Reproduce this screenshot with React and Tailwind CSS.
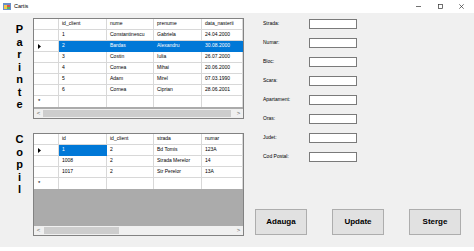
import React from 'react';

const parinteCols = ['id_client', 'nume', 'prenume', 'data_nasterii'];
const parinteRows = [
  ['1', 'Constantinescu', 'Gabriela', '24.04.2000'],
  ['2', 'Bardas', 'Alexandru', '30.08.2000'],
  ['3', 'Costin', 'Iulia', '26.07.2000'],
  ['4', 'Cornea', 'Mihai', '20.06.2000'],
  ['5', 'Adam', 'Mirel', '07.03.1990'],
  ['6', 'Cornea', 'Ciprian', '28.06.2001'],
];

const copilCols = ['id', 'id_client', 'strada', 'numar'];
const copilRows = [
  ['1', '2', 'Bd Tomis', '123A'],
  ['1008', '2', 'Strada Merelor', '14'],
  ['1017', '2', 'Str Perelor', '13A'],
];

const colW = ['w-[48px]', 'w-[47px]', 'w-[48px]', 'flex-1'];

const fields = ['Strada:', 'Numar:', 'Bloc:', 'Scara:', 'Apartament:', 'Oras:', 'Judet:', 'Cod Postal:'];

const Arrow = () => (
  <svg width="3" height="5" viewBox="0 0 3 5">
    <path d="M0 0 L3 2.5 L0 5 Z" fill="#000" />
  </svg>
);

const DataGrid = ({ cols, rows, current, isSelected, grayH, thumbLeft, thumbW }) => (
  <div className="w-[211px] border border-[#828282] bg-white flex flex-col text-[5px] text-black">
    <div className="flex h-[11px]">
      <div className="w-[25px] border-r border-b border-[#d8d8d8]" />
      {cols.map((c, i) => (
        <div key={c} className={`${colW[i]} border-r border-b border-[#d8d8d8] flex items-center pl-[3px] overflow-hidden whitespace-nowrap`}>
          {c}
        </div>
      ))}
    </div>
    {rows.map((r, ri) => (
      <div key={ri} className="flex h-[11px]">
        <div className="w-[25px] border-r border-b border-[#d8d8d8] flex items-center pl-[4px]">
          {ri === current && <Arrow />}
        </div>
        {r.map((v, ci) => {
          const sel = isSelected(ri, ci);
          return (
            <div
              key={ci}
              className={`${colW[ci]} border-r border-b flex items-center pl-[3px] overflow-hidden whitespace-nowrap ${
                sel ? 'bg-[#0078d7] text-white border-[#0078d7]' : 'border-[#d8d8d8]'
              }`}
            >
              {v}
            </div>
          );
        })}
      </div>
    ))}
    <div className="flex h-[11px]">
      <div className="w-[25px] border-r border-[#d8d8d8] flex items-center pl-[4px] text-[6px]">*</div>
      {cols.map((c, i) => (
        <div key={c} className={`${colW[i]} border-r border-[#d8d8d8]`} />
      ))}
    </div>
    <div className="bg-[#ababab]" style={{ height: grayH }} />
    <div className="h-[9px] bg-[#f0f0f0] flex items-center relative">
      <div className="w-[9px] flex justify-center text-[#606060] text-[6px]">&lt;</div>
      <div className="flex-1 h-[7px] relative">
        <div className="absolute top-0 h-[7px] bg-[#cdcdcd]" style={{ left: thumbLeft, width: thumbW }} />
      </div>
      <div className="w-[9px] flex justify-center text-[#606060] text-[6px]">&gt;</div>
    </div>
  </div>
);

const Letters = ({ text, top }) => (
  <div className={`w-[33px] flex flex-col items-center pl-[6px] font-bold text-[11px] leading-[12.5px] ${top}`}>
    {text.split('').map((ch, i) => (
      <span key={i}>{ch}</span>
    ))}
  </div>
);

export default function App() {
  return (
    <div className="w-[474px] h-[251px] bg-white overflow-hidden" style={{ fontFamily: '"Liberation Sans", Arial, sans-serif' }}>
      <div className="h-[13px] flex items-center">
        <svg className="ml-[3px]" width="8" height="7" viewBox="0 0 8 7">
          <rect x="0" y="0" width="8" height="7" fill="#6a8fc9" />
          <rect x="1" y="2" width="3" height="4" fill="#f2c94c" />
          <rect x="4" y="2" width="3" height="2" fill="#d9534f" />
          <rect x="4" y="4" width="3" height="2" fill="#5cb85c" />
        </svg>
        <span className="ml-[3px] text-[5.5px] text-black">Cartis</span>
        <div className="ml-auto flex items-center mr-[2px]">
          <div className="w-[21px] flex justify-center">
            <svg width="5" height="5" viewBox="0 0 5 5"><path d="M0 2.5 H5" stroke="#333" strokeWidth="0.7" /></svg>
          </div>
          <div className="w-[22px] flex justify-center">
            <svg width="5" height="5" viewBox="0 0 5 5"><rect x="0.4" y="0.4" width="4.2" height="4.2" fill="none" stroke="#333" strokeWidth="0.7" /></svg>
          </div>
          <div className="w-[21px] flex justify-center">
            <svg width="5" height="5" viewBox="0 0 5 5"><path d="M0.3 0.3 L4.7 4.7 M4.7 0.3 L0.3 4.7" stroke="#333" strokeWidth="0.7" /></svg>
          </div>
        </div>
      </div>

      <div className="h-[234px] bg-[#f0f0f0] flex">
        <div className="w-[250px] flex flex-col pt-[5px]">
          <div className="flex">
            <Letters text="Parinte" top="pt-[5px]" />
            <DataGrid
              cols={parinteCols}
              rows={parinteRows}
              current={1}
              isSelected={(r) => r === 1}
              grayH={2}
              thumbLeft={0}
              thumbW={188}
            />
          </div>
          <div className="flex mt-[14px]">
            <Letters text="Copil" top="pt-[0px]" />
            <DataGrid
              cols={copilCols}
              rows={copilRows}
              current={0}
              isSelected={(r, c) => r === 0 && c === 0}
              grayH={37}
              thumbLeft={1}
              thumbW={75}
            />
          </div>
        </div>

        <div className="flex-1 flex flex-col">
          <div className="flex flex-col gap-[9px] pt-[6px] pl-[13px]">
            {fields.map((f) => (
              <div key={f} className="flex items-center h-[10px]">
                <span className="w-[46px] text-[5px] text-black">{f}</span>
                <div className="w-[48px] h-[10px] bg-white border border-[#7a7a7a]" />
              </div>
            ))}
          </div>
          <div className="flex gap-[25px] pl-[5px] mt-[47px]">
            {['Adauga', 'Update', 'Sterge'].map((b) => (
              <div
                key={b}
                className="w-[52px] h-[26px] bg-[#e1e1e1] border border-[#adadad] flex items-center justify-center text-[8px] font-bold text-black"
              >
                {b}
              </div>
            ))}
          </div>
        </div>
      </div>
    </div>
  );
}
